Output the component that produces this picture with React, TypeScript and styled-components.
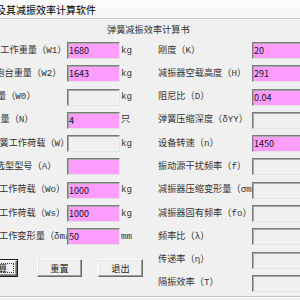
import React from "react";
import styled, { createGlobalStyle } from "styled-components";

const GlobalStyle = createGlobalStyle`
  html, body {
    margin: 0;
    padding: 0;
    width: 300px;
    height: 300px;
    overflow: hidden;
    background: #f0f0f0;
  }
  #root { width: 300px; height: 300px; }
`;

const LABEL_FONT = `"Liberation Mono", "Noto Sans CJK SC", monospace`;
const CJK_FONT = `"Noto Sans CJK SC", sans-serif`;

const Window = styled.div`
  width: 300px;
  height: 300px;
  overflow: hidden;
  display: flex;
  flex-direction: column;
  background: #f0f0f0;
`;

const TitleBar = styled.div`
  height: 18px;
  flex: none;
  display: flex;
  align-items: center;
  background: linear-gradient(#fcfcfc, #f4f5f6);
  border-bottom: 1px solid #cdcdcd;
  overflow: hidden;
`;

const TitleText = styled.span`
  font-family: ${CJK_FONT};
  font-size: 10px;
  line-height: 12px;
  color: #000;
  white-space: nowrap;
  margin-left: -54px;
  margin-top: 1px;
`;

const Body = styled.div`
  flex: 1;
  display: flex;
  flex-direction: column;
  min-height: 0;
`;

const Heading = styled.div`
  font-family: ${CJK_FONT};
  font-size: 9.2px;
  line-height: 12px;
  height: 12px;
  color: #333;
  margin: 4px 0 0 107px;
  white-space: nowrap;
`;

const Columns = styled.div`
  display: flex;
  margin-top: 7px;
`;

const Column = styled.div<{ $width?: number }>`
  display: flex;
  flex-direction: column;
  gap: 6.3px;
  flex: none;
  width: ${(p) => (p.$width ? `${p.$width}px` : "auto")};
`;

const Row = styled.div`
  display: flex;
  align-items: center;
  height: 17px;
`;

const Label = styled.div<{ $width: number; $indent: number }>`
  flex: none;
  width: ${(p) => p.$width}px;
  overflow: hidden;
  white-space: nowrap;
  text-indent: ${(p) => p.$indent}px;
  font-family: ${LABEL_FONT};
  font-size: 9.2px;
  line-height: 12px;
  color: #333;
`;

const TextBox = styled.div<{ $pink: boolean }>`
  flex: none;
  box-sizing: border-box;
  width: 53px;
  height: 17px;
  padding: 0 0 0 1px;
  display: flex;
  align-items: center;
  background: ${(p) => (p.$pink ? "#ff9dff" : "#f0f0f0")};
  border: 1px solid;
  border-color: #7a7a7a #e4e4e4 #e4e4e4 #7a7a7a;
  box-shadow: inset 1px 1px 0 #a8a8a8;
  font-family: ${CJK_FONT};
  font-size: 9px;
  line-height: 11px;
  color: #111;
  white-space: nowrap;
  overflow: hidden;
`;

const Unit = styled.span`
  margin-left: 1px;
  font-family: ${LABEL_FONT};
  font-size: 9.2px;
  line-height: 12px;
  color: #333;
`;

const ButtonRow = styled.div`
  display: flex;
  gap: 16px;
  margin-top: 7.3px;
  margin-left: -22px;
`;

const Button = styled.div<{ $default?: boolean }>`
  position: relative;
  flex: none;
  box-sizing: border-box;
  width: ${(p) => (p.$default ? 40 : 45)}px;
  margin-right: ${(p) => (p.$default ? 3 : 0)}px;
  height: 18px;
  display: flex;
  align-items: center;
  justify-content: center;
  background: #f0f0f0;
  border: 1px solid;
  border-color: ${(p) => (p.$default ? "#1c1c1c" : "#ffffff #6a6a6a #6a6a6a #ffffff")};
  box-shadow: ${(p) =>
    p.$default
      ? "inset 1px 1px 0 #ffffff, inset -1px -1px 0 #6a6a6a, inset -2px -2px 0 #a0a0a0"
      : "inset -1px -1px 0 #a0a0a0, inset 1px 1px 0 #e3e3e3"};
  font-family: ${CJK_FONT};
  font-size: 9.2px;
  line-height: 12px;
  color: #222;
  &::after {
    content: "";
    display: ${(p) => (p.$default ? "block" : "none")};
    position: absolute;
    inset: 3px;
    border: 1px dotted #333;
  }
`;

const BottomEdge = styled.div`
  margin-top: auto;
  margin-bottom: 1px;
  height: 2px;
  flex: none;
  border-top: 1px solid #c4c4c4;
  background: linear-gradient(#ffffff 1px, #f0f0f0 1px);
`;

type Field = {
  label: string;
  indent: number;
  value: string;
  pink: boolean;
  unit?: string;
};

const leftFields: Field[] = [
  { label: "设备工作重量（W1）", indent: -18.1, value: "1680", pink: true, unit: "kg" },
  { label: "炮台重量（W2）", indent: -4.7, value: "1643", pink: true, unit: "kg" },
  { label: "总重量（W0）", indent: -21.4, value: "", pink: false, unit: "kg" },
  { label: "弹簧数量（N）", indent: -27.1, value: "4", pink: true, unit: "只" },
  { label: "弹簧工作荷载（W）", indent: -9.7, value: "", pink: false, unit: "kg" },
  { label: "弹簧选型型号（A）", indent: -22.6, value: "", pink: true },
  { label: "设备工作荷载（Wo）", indent: -19.4, value: "1000", pink: true, unit: "kg" },
  { label: "静态工作荷载（Ws）", indent: -19.4, value: "1000", pink: true, unit: "kg" },
  { label: "最大工作变形量（δmax）", indent: -19.4, value: "50", pink: true, unit: "mm" },
];

const rightFields: Field[] = [
  { label: "刚度（K）", indent: 0, value: "20", pink: true },
  { label: "减振器空载高度（H）", indent: 0, value: "291", pink: true },
  { label: "阻尼比（D）", indent: 0, value: "0.04", pink: true },
  { label: "弹簧压缩深度（δYY）", indent: 0, value: "", pink: false },
  { label: "设备转速（n）", indent: 0, value: "1450", pink: true },
  { label: "振动源干扰频率（f）", indent: 0, value: "", pink: false },
  { label: "减振器压缩变形量（σmax）", indent: 0, value: "", pink: false },
  { label: "减振器固有频率（fo）", indent: 0, value: "", pink: false },
  { label: "频率比（λ）", indent: 0, value: "", pink: false },
  { label: "传递率（η）", indent: 0, value: "", pink: false },
  { label: "隔振效率（T）", indent: 0, value: "", pink: false },
];

export default function App() {
  return (
    <>
      <GlobalStyle />
      <Window>
        <TitleBar>
          <TitleText>弹簧减振器及其减振效率计算软件</TitleText>
        </TitleBar>
        <Body>
          <Heading>弹簧减振效率计算书</Heading>
          <Columns>
            <Column $width={158}>
              {leftFields.map((f) => (
                <Row key={f.label}>
                  <Label $width={67} $indent={f.indent}>
                    {f.label}
                  </Label>
                  <TextBox $pink={f.pink}>{f.value}</TextBox>
                  {f.unit && <Unit>{f.unit}</Unit>}
                </Row>
              ))}
              <ButtonRow>
                <Button $default>计算</Button>
                <Button>重置</Button>
                <Button>退出</Button>
              </ButtonRow>
            </Column>
            <Column>
              {rightFields.map((f) => (
                <Row key={f.label}>
                  <Label $width={94} $indent={f.indent}>
                    {f.label}
                  </Label>
                  <TextBox $pink={f.pink}>{f.value}</TextBox>
                </Row>
              ))}
            </Column>
          </Columns>
          <BottomEdge />
        </Body>
      </Window>
    </>
  );
}
